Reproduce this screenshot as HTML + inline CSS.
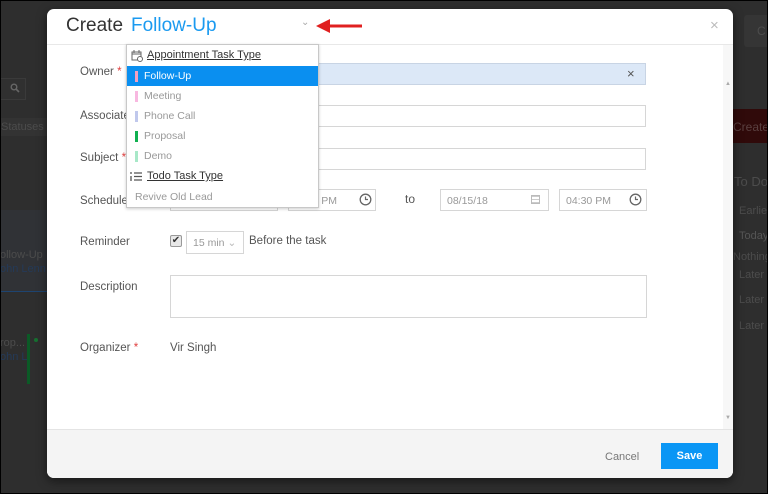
<!DOCTYPE html>
<html><head><meta charset="utf-8"><style>
*{box-sizing:border-box;margin:0;padding:0}
body{width:768px;height:494px;overflow:hidden;background:#2e2e2e;font-family:"Liberation Sans",sans-serif;position:relative}
.a{position:absolute;white-space:nowrap}
.bgt{color:#4c4c4c;font-size:12px}
.lbl{position:absolute;left:80px;font-size:11.5px;color:#555;white-space:nowrap}
.req{color:#e04040}
.inp{position:absolute;border:1px solid #d6d6d6;background:#fff;height:22px;font-size:10.5px;color:#999;padding:5px 6px;white-space:nowrap}
.dd div.it{height:20px;line-height:20px;font-size:10.5px;color:#999;padding-left:17px;position:relative}
.dd div.it i{position:absolute;left:8px;top:5px;width:3px;height:11px}
.hd{height:21px;line-height:21px;font-size:11px;color:#333;text-decoration:underline;padding-left:20px;position:relative}
</style></head><body>
<div class="a" style="left:0;top:0;width:768px;height:494px;border:1px solid #000;z-index:10;pointer-events:none"></div>
<!-- background app -->
<div class="a" style="left:0;top:78px;width:26px;height:22px;border:1px solid #3a3a3a;border-left:none;background:#303030"></div>
<svg class="a" style="left:10px;top:83px" width="10" height="10"><circle cx="4" cy="4" r="2.8" fill="none" stroke="#666" stroke-width="1.4"/><path d="M6 6L9 9" stroke="#666" stroke-width="1.6"/></svg>
<div class="a" style="left:0;top:118px;width:47px;height:18px;background:#333"></div>
<div class="a bgt" style="left:1px;top:121px;font-size:11px">Statuses</div>
<div class="a" style="left:0;top:210px;width:47px;height:82px;background:#303236"></div>
<div class="a bgt" style="left:0;top:249px;font-size:11px">ollow-Up</div>
<div class="a" style="left:0;top:263px;font-size:11px;color:#243a58">ohn Lenn</div>
<div class="a" style="left:0;top:291px;width:47px;height:1px;background:#1e4470"></div>
<div class="a bgt" style="left:0;top:337px;font-size:11px">rop...</div>
<div class="a" style="left:0;top:351px;font-size:11px;color:#243a58">ohn L</div>
<div class="a" style="left:27px;top:334px;width:3px;height:50px;background:#0b5a26"></div>
<div class="a" style="left:34px;top:338px;width:4px;height:4px;border-radius:50%;background:#167030"></div>
<div class="a" style="left:744px;top:15px;width:30px;height:32px;background:#353535;border-radius:3px"></div>
<div class="a bgt" style="left:757px;top:24px">C</div>
<div class="a" style="left:733px;top:109px;width:35px;height:34px;background:#300a0a"></div>
<div class="a bgt" style="left:733px;top:120px;color:#5a4040">Create</div>
<div class="a bgt" style="left:734px;top:174px;font-size:13px">To Do</div>
<div class="a bgt" style="left:739px;top:205px;font-size:11px">Earlie</div>
<div class="a bgt" style="left:739px;top:230px;font-size:11px;color:#555">Today</div>
<div class="a bgt" style="left:733px;top:251px;font-size:11px">Nothing</div>
<div class="a bgt" style="left:739px;top:269px;font-size:11px">Later</div>
<div class="a bgt" style="left:739px;top:294px;font-size:11px">Later</div>
<div class="a bgt" style="left:739px;top:320px;font-size:11px">Later</div>

<!-- modal -->
<div class="a" style="left:47px;top:9px;width:686px;height:469px;background:#fff;border-radius:7px;overflow:hidden;box-shadow:0 3px 10px rgba(0,0,0,.5)">
  <div class="a" style="left:0;top:35px;width:686px;height:1px;background:#e8e8e8"></div>
  <div class="a" style="left:0;top:420px;width:686px;height:49px;background:#f4f4f4;border-top:1px solid #e4e4e4"></div>
  <div class="a" style="left:676px;top:36px;width:10px;height:384px;background:#f7f7f7"></div>
  <div class="a" style="left:678px;top:72px;font-size:6px;color:#aaa">&#9650;</div>
  <div class="a" style="left:678px;top:406px;font-size:6px;color:#aaa">&#9660;</div>
</div>
<div class="a" style="left:66px;top:15px;font-size:19px;color:#333">Create</div>
<div class="a" style="left:131px;top:15px;font-size:19px;color:#1a9af0">Follow-Up</div>
<div class="a" style="left:301px;top:17px;font-size:10px;color:#aaa">&#8964;</div>
<svg class="a" style="left:314px;top:18px" width="50" height="16"><path d="M14 8H48" stroke="#e02020" stroke-width="3"/><path d="M2 8L16 1V15Z" fill="#e02020"/></svg>
<div class="a" style="left:710px;top:17px;font-size:15px;color:#bbb">&#215;</div>

<!-- form -->
<div class="lbl" style="top:66px">Owner <span class="req">*</span></div>
<div class="inp" style="left:318px;top:63px;width:328px;background:#dce8f7;border-color:#c8d4e4"></div>
<div class="a" style="left:627px;top:66px;font-size:13px;color:#555">&#215;</div>
<div class="lbl" style="top:110px">Associate</div>
<div class="inp" style="left:318px;top:105px;width:328px"></div>
<div class="lbl" style="top:152px">Subject <span class="req">*</span></div>
<div class="inp" style="left:318px;top:148px;width:328px"></div>
<div class="lbl" style="top:195px">Schedule</div>
<div class="inp" style="left:170px;top:189px;width:108px"></div>
<div class="inp" style="left:288px;top:189px;width:88px">&nbsp;&nbsp;&nbsp;&nbsp;&nbsp;&nbsp;&nbsp;&nbsp;&nbsp;PM</div>
<svg class="a" style="left:359px;top:193px" width="13" height="13"><circle cx="6.5" cy="6.5" r="5.3" fill="none" stroke="#666" stroke-width="1.3"/><path d="M6.5 3.5V6.5H9" fill="none" stroke="#666" stroke-width="1.2"/></svg>
<div class="a" style="left:405px;top:192px;font-size:12px;color:#555">to</div>
<div class="inp" style="left:440px;top:189px;width:109px">08/15/18</div>
<div class="a" style="left:531px;top:195px;width:9px;height:9px;border:1px solid #bbb;background:repeating-linear-gradient(0deg,#ccc 0 1px,#fff 1px 3px)"></div>
<div class="inp" style="left:559px;top:189px;width:88px">04:30 PM</div>
<svg class="a" style="left:629px;top:193px" width="13" height="13"><circle cx="6.5" cy="6.5" r="5.3" fill="none" stroke="#666" stroke-width="1.3"/><path d="M6.5 3.5V6.5H9" fill="none" stroke="#666" stroke-width="1.2"/></svg>
<div class="lbl" style="top:236px">Reminder</div>
<div class="a" style="left:170px;top:235px;width:12px;height:12px;background:#e8e8e8;border:1px solid #999;border-radius:2px;font-size:10px;line-height:10px;text-align:center;color:#333">&#10004;</div>
<div class="inp" style="left:186px;top:231px;width:58px;height:23px">15 min <span style="color:#bbb">&#8964;</span></div>
<div class="a" style="left:249px;top:235px;font-size:11.5px;color:#555">Before the task</div>
<div class="lbl" style="top:281px">Description</div>
<div class="inp" style="left:170px;top:275px;width:477px;height:43px"></div>
<div class="lbl" style="top:342px">Organizer <span class="req">*</span></div>
<div class="a" style="left:170px;top:342px;font-size:11.5px;color:#555">Vir Singh</div>
<div class="a" style="left:605px;top:451px;font-size:11px;color:#777">Cancel</div>
<div class="a" style="left:661px;top:443px;width:57px;height:26px;background:#0a96f5;color:#fff;font-size:11px;font-weight:bold;text-align:center;line-height:26px">Save</div>

<!-- dropdown -->
<div class="a dd" style="left:126px;top:44px;width:193px;height:164px;background:#fff;border:1px solid #c8c8c8;box-shadow:0 1px 3px rgba(0,0,0,.2)">
  <div class="hd"><svg class="a" style="left:4px;top:5px" width="12" height="12"><rect x="1" y="2" width="9" height="8" fill="none" stroke="#666"/><path d="M1 4H10M3 0V3M8 0V3" stroke="#666"/><circle cx="9" cy="9" r="2.5" fill="#fff" stroke="#666"/></svg>Appointment Task Type</div>
  <div class="it" style="background:#0a8ff0;color:#fff"><i style="background:#f4a0c0"></i>Follow-Up</div>
  <div class="it"><i style="background:#f8b8e0"></i>Meeting</div>
  <div class="it"><i style="background:#c0c8ec"></i>Phone Call</div>
  <div class="it"><i style="background:#10b050"></i>Proposal</div>
  <div class="it"><i style="background:#a8e8c8"></i>Demo</div>
  <div class="hd"><svg class="a" style="left:3px;top:5px" width="13" height="11"><path d="M1 1V3M1 5V10M4 2H12M4 5.5H12M4 9H12" stroke="#555" stroke-width="1.3"/></svg>Todo Task Type</div>
  <div class="it" style="padding-left:8px">Revive Old Lead</div>
</div>
</body></html>
